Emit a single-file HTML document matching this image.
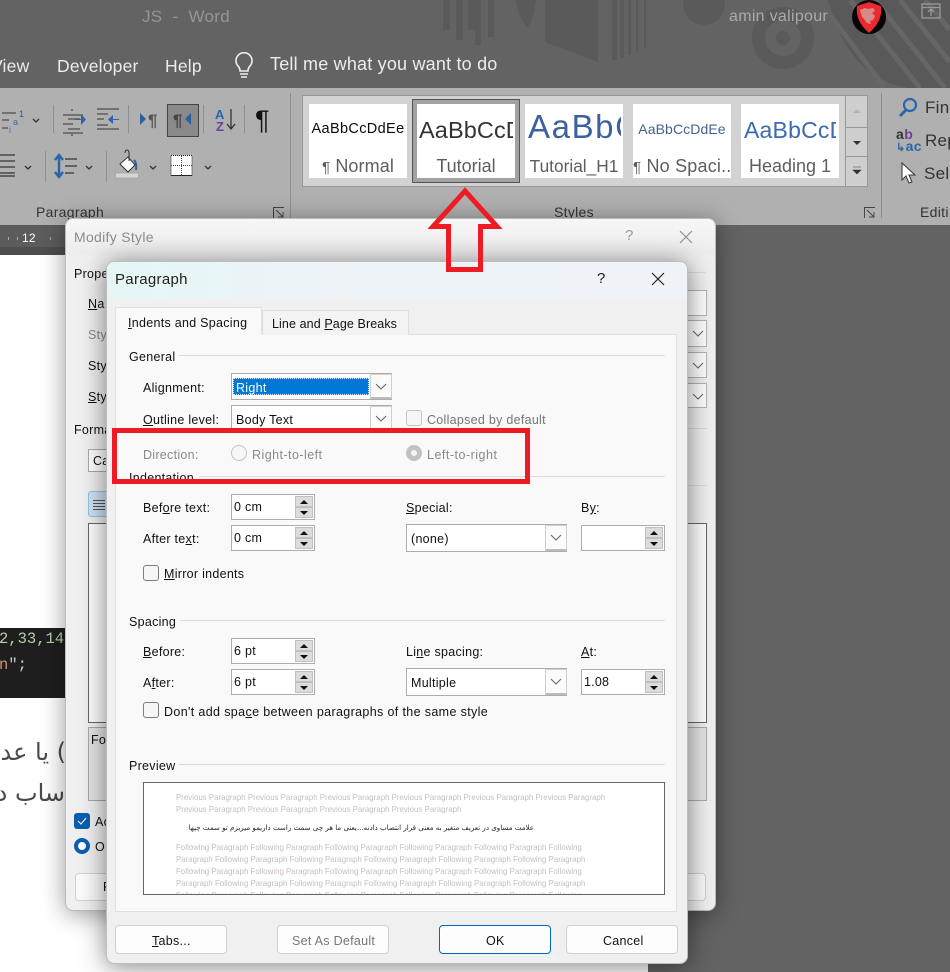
<!DOCTYPE html>
<html><head><meta charset="utf-8"><style>
html,body{margin:0;padding:0;width:950px;height:972px;overflow:hidden;background:#636363}
*{box-sizing:border-box}
div,span,svg{position:absolute}
u{position:static}
.t{white-space:nowrap;transform:translateY(calc(-50% + 1px));font-family:"Liberation Sans","Noto Sans CJK SC",sans-serif;font-size:12.5px;letter-spacing:.28px;color:#111;line-height:16px}
.g{color:#8a8a8a}
.r{font-size:18px;letter-spacing:.2px;color:#ececec}
.tile{top:104px;width:98px;height:74px;background:#fff;overflow:hidden}
.tile span{white-space:nowrap;font-family:"Liberation Sans",sans-serif}
.s1{left:0;width:100%;text-align:center;top:10px;height:30px;line-height:30px;overflow:hidden}
.s2{left:0;width:100%;text-align:center;top:50px;font-size:18px;line-height:24px;color:#5e5e5e;letter-spacing:.1px}
.sep{width:1px;background:#8e8e8e}
.box{background:#fff;border:1px solid #adadad}
.sel{background:#fff;border:2px solid #b4b4b4;border-width:1px}
.dd{width:22px;background:#fbfbfb;border:1px solid #cfcfcf;border-bottom:2px solid #bcbcbc}
.btn{background:#fdfdfd;border:1px solid #d0d0d0;border-radius:4px;height:29px;text-align:center}
.chk{width:16px;height:16px;border:1px solid #7d7d7d;border-radius:3px;background:#f6f6f6}
.line{height:1px;background:#dcdcdc}
.pv{font-family:"Liberation Sans",sans-serif;font-size:7.850px;letter-spacing:.02px;color:#c6bec3;white-space:nowrap;left:32px;line-height:12px}
</style></head><body>

<!-- title bar -->
<div style="left:0;top:0;width:950px;height:88px;background:#636363;overflow:hidden">
<svg width="950" height="88" style="left:0;top:0">
<g fill="#5a5a5a">
<rect x="443" y="0" width="7" height="30"/><rect x="456" y="0" width="7" height="40"/><rect x="468" y="0" width="7" height="30"/>
<rect x="475" y="0" width="6" height="45"/><rect x="488" y="0" width="6" height="37"/>
<path d="M516 0h20q-2 18 -8 28q-10-10-12-28z"/>
<path d="M545 0h53v62l-53-20z"/><path d="M612 0h5v60h-5zM620 0h4v58h-4zM628 0h3v55h-3zM636 0h2v52h-2zM644 0h2v48h-2z"/>
<circle cx="704" cy="4" r="21"/>
<circle cx="783" cy="38" r="31"/>
</g>
<circle cx="783" cy="38" r="18" fill="#636363"/>
<circle cx="783" cy="38" r="7" fill="#5a5a5a"/>
<path d="M828 0h122v88h-42q-60-10-80-88z" fill="#595959"/>
<g stroke="#666" stroke-width="5"><path d="M850 0l70 88M875 0l70 88M900 0l50 62M925 0l25 30M830 15l55 73"/></g>
<circle cx="869" cy="17" r="17" fill="#050505"/>
<path d="M869 2l12 4q2 15-12 27q-14-12-12-27z" fill="#ea2a2e"/>
<path d="M860 10l5-2 3 1 5-1 2 3-3 2 3 3-2 4-3 1 1 3-4-1-3-4-2-2z" fill="#d68a8a"/>
<rect x="922" y="4" width="18" height="14" fill="none" stroke="#9a9a9a" stroke-width="1.3"/><path d="M922 7.500h18M931 16v-6M928 12l3-3 3 3" fill="none" stroke="#9a9a9a" stroke-width="1.3"/>
</svg>
</div>
<div class="t" style="left:142px;top:16px;font-size:17px;color:#959595;white-space:pre;letter-spacing:.3px">JS  -  Word</div>
<div class="t" style="left:729px;top:16px;font-size:16px;color:#aaa;letter-spacing:.3px">amin valipour</div>
<div class="t r" style="left:-9px;top:65px;font-size:17.5px">View</div>
<div class="t r" style="left:57px;top:65px;font-size:17.5px">Developer</div>
<div class="t r" style="left:165px;top:65px;font-size:17.5px">Help</div>
<div class="t r" style="left:270px;top:63px;font-size:18px">Tell me what you want to do</div>
<svg width="22" height="28" style="left:233px;top:52px" fill="none" stroke="#eee" stroke-width="1.6"><path d="M7 19q0-3-2-5a8 8 0 1 1 12 0q-2 2-2 5z"/><path d="M7 22h8M8 25h6"/></svg>

<!-- ribbon -->
<div style="left:0;top:88px;width:950px;height:137px;background:#b0b0b0"></div>
<div class="sep" style="left:290px;top:93px;height:125px"></div>
<div class="sep" style="left:881px;top:93px;height:125px"></div>

<svg width="290" height="90" style="left:0;top:100px">
<g stroke="#333" stroke-width="1" fill="none">
<path d="M2 13h14M2 20h7M2 28h6"/>
<path d="M63 15h20M68 19h12M63 24h10M68 29h12M63 33h20M72 9v2M72 34v2" />
<path d="M97 9h22M97 14h11M97 19h7M97 25h11M97 29h22"/>
</g>
<text x="13" y="25" font-family="Liberation Sans" font-size="9" fill="#3a6ea5">a</text><text x="19" y="17" font-family="Liberation Sans" font-size="9" fill="#2a5a9a">1</text><text x="9" y="33" font-family="Liberation Sans" font-size="9" fill="#2a7ab8">i</text>
<path d="M75 19h6v-5l5 5.500-5 5.500v-5h-6z" fill="#2b66a8"/>
<path d="M119 19h-6v-4l-5 4.500 5 4.500v-4h6z" fill="#2b66a8"/>
<path d="M140 13l6 6-6 6z" fill="#2b5f9e"/>
<rect x="167.500" y="4.500" width="31" height="32" fill="#8a8a8a" stroke="#444"/>
<text x="148" y="26" font-family="Liberation Sans" font-size="17" font-weight="bold" fill="#555">¶</text>
<text x="173" y="26" font-family="Liberation Sans" font-size="17" font-weight="bold" fill="#444">¶</text>
<path d="M191 13l-6 6 6 6z" fill="#2b5f9e"/>
<text x="215" y="19" font-family="Liberation Sans" font-size="13" font-weight="bold" fill="#2b66a8">A</text>
<text x="216" y="31" font-family="Liberation Sans" font-size="13" font-weight="bold" fill="#6b3f98">Z</text>
<path d="M231 9v20M227 24l4 5 4-5" fill="none" stroke="#333" stroke-width="1.300"/>
<text x="255" y="29" font-family="Liberation Sans" font-size="27" fill="#111">¶</text>
<g fill="none" stroke="#333" stroke-width="1.300">
<path d="M33 19l3 3 3-3M25 66l3 3 3-3M86 66l3 3 3-3M150 66l3 3 3-3M205 66l3 3 3-3"/>
<path d="M0 55h15M0 61h15M0 67h15M0 73h15M0 76h15" />
<path d="M65 59h12M65 66h12M65 73h9"/>
</g>
<path d="M59 56v20M55 60l4-5 4 5M55 72l4 5 4-5" fill="none" stroke="#2b66a8" stroke-width="2.500"/>
<path d="M128 57l7 8-7 7-8-8z" fill="#fff" stroke="#333"/><path d="M125 53q0-3 2-3t2 3v8" fill="none" stroke="#333"/>
<path d="M134 60q3 3 2 10" fill="none" stroke="#2b5f9e" stroke-width="2"/>
<rect x="115.500" y="73" width="23" height="5" fill="#d5d5d5" stroke="#a5a5a5" stroke-width=".8"/>
<rect x="171" y="55.500" width="21" height="20" fill="#fff" stroke="#222" stroke-dasharray="1 1"/>
<path d="M171 75.500h21" stroke="#222"/><path d="M181.500 56v20M171 65.500h21" stroke="#444" stroke-dasharray="1 1"/>
<g fill="#8e8e8e"><rect x="53" y="5" width="1" height="28"/><rect x="128" y="5" width="1" height="28"/><rect x="203" y="5" width="1" height="28"/><rect x="244" y="5" width="1" height="28"/><rect x="45" y="51" width="1" height="31"/><rect x="106" y="51" width="1" height="31"/></g>
</svg>

<div class="t" style="left:36px;top:211px;font-size:14px;color:#333;letter-spacing:.3px">Paragraph</div>
<div class="t" style="left:554px;top:211px;font-size:14px;color:#333;letter-spacing:.3px">Styles</div>
<div class="t" style="left:920px;top:211px;font-size:14px;color:#333;letter-spacing:.3px">Editi</div>
<svg width="12" height="12" style="left:273px;top:207px" fill="none" stroke="#444"><path d="M.5 11V.5H11M3 3l7 7M10 5v5H5"/></svg>
<svg width="12" height="12" style="left:864px;top:207px" fill="none" stroke="#444"><path d="M.5 11V.5H11M3 3l7 7M10 5v5H5"/></svg>

<!-- styles gallery -->
<div style="left:302px;top:95px;width:566px;height:92px;background:#d2d2d2;border:1px solid #989898"></div>
<div style="left:412px;top:99px;width:108px;height:84px;background:#a2a2a2;border:1px solid #555"></div>
<div class="tile" style="left:309px"><span class="s1" style="font-size:14.500px;color:#0b0b0b;letter-spacing:.35px">AaBbCcDdEe</span><span class="s2"><span style="position:static;font-size:15px">¶</span> Normal</span></div>
<div class="tile" style="left:417px"><span class="s1" style="font-size:23.500px;color:#333;text-align:left;left:2px;width:94px;top:11px;letter-spacing:.1px">AaBbCcD</span><span class="s2" style="letter-spacing:0">Tutorial</span></div>
<div class="tile" style="left:525px"><span class="s1" style="font-size:33px;color:#3d60a0;text-align:left;left:3px;width:93px;top:8px;letter-spacing:1.6px;height:36px;line-height:30px">AaBbC</span><span class="s2" style="font-size:17.300px;letter-spacing:0">Tutorial_H1</span></div>
<div class="tile" style="left:633px"><span class="s1" style="font-size:14px;color:#44618f;letter-spacing:.1px">AaBbCcDdEe</span><span class="s2" style="font-size:18px;letter-spacing:.2px"><span style="position:static;font-size:15px">¶</span> No Spaci...</span></div>
<div class="tile" style="left:741px"><span class="s1" style="font-size:23px;color:#3a6ab0;text-align:left;left:3px;width:92px;top:11px;letter-spacing:.2px">AaBbCcD</span><span class="s2" style="letter-spacing:0">Heading 1</span></div>
<div style="left:845px;top:96px;width:23px;height:90px;background:#cfcfcf;border-left:1px solid #989898;border-right:1px solid #989898"></div>
<div style="left:845px;top:127px;width:23px;height:1px;background:#989898"></div>
<div style="left:845px;top:156px;width:23px;height:1px;background:#989898"></div>
<svg width="23" height="90" style="left:845px;top:96px"><path d="M8 17l4-4 4 4z" fill="#b4b4b4"/><path d="M8 45h8l-4 4z" fill="#333"/><path d="M8 71h8M8 74h8l-4 4z" fill="#333" stroke="#333" stroke-width=".6"/></svg>

<!-- editing -->
<svg width="22" height="22" style="left:897px;top:96px" fill="none"><circle cx="13" cy="9" r="6" stroke="#2b66a8" stroke-width="2.200"/><path d="M9 14l-6 6" stroke="#2b66a8" stroke-width="3"/></svg>
<div class="t" style="left:925px;top:107px;font-size:17px;color:#333">Find</div>
<div style="left:896px;top:128px;font:bold 14px/12px 'Liberation Sans';color:#333;letter-spacing:.4px">a<span style="position:static;color:#6b3f98">b</span><br><span style="position:static;color:#2b66a8;font-size:11px">↳</span><span style="position:static;color:#2b66a8">ac</span></div>
<div class="t" style="left:925px;top:140px;font-size:17px;color:#333">Rep</div>
<svg width="16" height="24" style="left:901px;top:162px"><path d="M1 1v17l4-4 3 7 3-1-3-7h6z" fill="#fff" stroke="#333"/></svg>
<div class="t" style="left:924px;top:173px;font-size:17px;color:#333">Sele</div>

<!-- document area -->
<div style="left:0;top:225px;width:70px;height:22px;background:#5c5c5c"></div>
<div style="left:0;top:247px;width:70px;height:8px;background:#4e4e4e"></div>
<div style="left:8px;top:237px;width:1px;height:3px;background:#aaa"></div>
<div style="left:17px;top:237px;width:1px;height:3px;background:#aaa"></div>
<div style="left:50px;top:237px;width:1px;height:3px;background:#aaa"></div>
<div class="t" style="left:22px;top:237px;font-size:12px;color:#fff;letter-spacing:.2px">12</div>
<div style="left:0;top:255px;width:648px;height:717px;background:#fff"></div>
<div style="left:0;top:628px;width:70px;height:70px;background:#1e1e1e"></div>
<div class="t" style="left:-1px;top:638px;font-family:'Liberation Mono',monospace;font-size:15.500px;letter-spacing:0;color:#b5cea8">2,33,14</div>
<div class="t" style="left:-1px;top:664px;font-family:'Liberation Mono',monospace;font-size:15.500px;letter-spacing:0;color:#ce9178">n<span style="position:static;color:#ccc">";</span></div>
<div class="t" dir="rtl" style="right:884px;top:751px;font-family:'DejaVu Sans',sans-serif;font-size:24px;letter-spacing:0;color:#4a4a4a;line-height:30px">) یا عدد</div>
<div class="t" dir="rtl" style="right:885px;top:792px;font-family:'DejaVu Sans',sans-serif;font-size:24px;letter-spacing:0;color:#4a4a4a;line-height:30px">ساب داد</div>

<!-- modify style dialog -->
<div style="left:65px;top:218px;width:651px;height:693px;background:#f0f0f0;border:1px solid #bbb;border-radius:8px;box-shadow:0 3px 24px rgba(0,0,0,.4);overflow:hidden">
<div style="left:0;top:0;width:100%;height:36px;background:linear-gradient(#f6f6f6,#ededed)"></div>
</div>
<div class="t" style="left:74px;top:236px;font-size:14px;color:#8c8c8c;letter-spacing:.3px">Modify Style</div>
<div class="t" style="left:625px;top:235px;font-size:15px;color:#9a9a9a">?</div>
<svg width="14" height="14" style="left:679px;top:230px" stroke="#8e8e8e" stroke-width="1.100"><path d="M1 1l12 12M13 1L1 13"/></svg>
<div class="t" style="left:74px;top:273px">Prope</div>
<div class="t" style="left:88px;top:303px"><u>N</u>a</div>
<div class="t g" style="left:88px;top:334px">Sty</div>
<div class="t" style="left:88px;top:365px">Sty</div>
<div class="t" style="left:88px;top:396px"><u>S</u>ty</div>
<div class="t" style="left:74px;top:429px">Forma</div>
<div style="left:88px;top:449px;width:30px;height:23px;background:#fff;border:1px solid #aaa"></div>
<div class="t" style="left:93px;top:460px">Ca</div>
<div style="left:88px;top:491px;width:22px;height:26px;background:#cfe3f6;border:1px solid #99c0e3;border-radius:3px"></div>
<svg width="14" height="12" style="left:93px;top:499px" stroke="#555"><path d="M0 1.500h12M0 4.500h12M0 7.500h12M0 10.500h12"/></svg>
<div style="left:88px;top:523px;width:619px;height:200px;background:#fff;border:1px solid #666"></div>
<div style="left:88px;top:727px;width:619px;height:74px;background:#e6e6e6;border:1px solid #aaa"></div>
<div class="t" style="left:91px;top:739px">Fo</div>
<div style="left:74px;top:813px;width:16px;height:16px;background:#0a5eb0;border-radius:3px"></div>
<svg width="12" height="12" style="left:76px;top:815px" fill="none" stroke="#fff" stroke-width="1"><path d="M2 6l3 3 5-6"/></svg>
<div class="t" style="left:95px;top:821px">Ac</div>
<div style="left:74px;top:838px;width:16px;height:16px;background:#fff;border:4.500px solid #0a5eb0;border-radius:50%"></div>
<div class="t" style="left:95px;top:846px">O</div>
<div style="left:75px;top:873px;width:631px;height:28px;background:#fbfbfb;border:1px solid #d0d0d0;border-radius:4px"></div>
<div class="t" style="left:103px;top:886px">F</div>
<div class="line" style="left:640px;top:272px;width:66px"></div>
<div class="sel" style="left:680px;top:290px;width:27px;height:26px"></div>
<div class="sel" style="left:680px;top:320px;width:27px;height:27px"></div>
<div class="sel" style="left:680px;top:352px;width:27px;height:26px"></div>
<div class="sel" style="left:680px;top:383px;width:27px;height:25px"></div>
<svg width="12" height="90" style="left:692px;top:327px" fill="none" stroke="#666"><path d="M1 4l5 5 5-5M1 36l5 5 5-5M1 67l5 5 5-5"/></svg>
<div class="line" style="left:680px;top:428px;width:27px"></div>
<div class="line" style="left:680px;top:485px;width:27px"></div>

<!-- paragraph dialog -->
<div style="left:106px;top:261px;width:582px;height:703px;background:#f0f0f0;border:1px solid #bdbdbd;border-radius:8px;box-shadow:0 2px 26px rgba(0,0,0,.5);overflow:hidden">
<div style="left:0;top:0;width:100%;height:36px;background:linear-gradient(90deg,#e5f6f6 0,#eef3f8 45%,#eff3f8 100%)"></div>
</div>
<div class="t" style="left:115px;top:279px;font-size:15px;letter-spacing:.3px;color:#222">Paragraph</div>
<div class="t" style="left:597px;top:278px;font-size:15px;font-weight:400;color:#222">?</div>
<svg width="14" height="14" style="left:651px;top:272px" stroke="#222" stroke-width="1.200"><path d="M1 1l12 12M13 1L1 13"/></svg>

<div style="left:115px;top:334px;width:562px;height:578px;background:#f9f9f9;border:1px solid #e0e0e0"></div>
<div style="left:262px;top:310px;width:147px;height:25px;background:#f3f3f3;border:1px solid #e0e0e0;border-bottom:0"></div>
<div style="left:115px;top:307px;width:147px;height:28px;background:#f9f9f9;border:1px solid #e0e0e0;border-bottom:0"></div>
<div class="t" style="left:128px;top:322px"><u>I</u>ndents and Spacing</div>
<div class="t" style="left:272px;top:323px;letter-spacing:.1px">Line and <u>P</u>age Breaks</div>

<div class="t" style="left:129px;top:356px">General</div><div class="line" style="left:179px;top:355px;width:486px"></div>
<div class="t" style="left:143px;top:387px">Ali<u>g</u>nment:</div>
<div class="box" style="left:231px;top:373px;width:161px;height:27px"></div>
<div style="left:233px;top:378px;width:136px;height:17px;background:#0078d7;outline:1px dotted #dfe9f5;outline-offset:-1px"></div>
<div class="t" style="left:236px;top:387px;color:#fff">Right</div>
<div class="dd" style="left:370px;top:374px;height:25px"></div>
<div class="t" style="left:143px;top:419px"><u>O</u>utline level:</div>
<div class="box" style="left:231px;top:405px;width:161px;height:27px"></div>
<div class="t" style="left:236px;top:419px">Body Text</div>
<div class="dd" style="left:370px;top:406px;height:25px"></div>
<svg width="12" height="40" style="left:375px;top:382px" fill="none" stroke="#666"><path d="M1 2l5 5 5-5M1 34l5 5 5-5"/></svg>
<div class="chk" style="left:406px;top:410px;border-color:#c4c4c4"></div>
<div class="t g" style="left:427px;top:419px;color:#767676">Collapsed by default</div>

<div class="t g" style="left:143px;top:454px">Direction:</div>
<div style="left:231px;top:445px;width:16px;height:16px;border:1px solid #c4c4c4;border-radius:50%;background:#f6f6f6"></div>
<div class="t g" style="left:252px;top:454px;letter-spacing:.45px">Right-to-left</div>
<div style="left:406px;top:445px;width:16px;height:16px;border:5px solid #c2c2c2;border-radius:50%;background:#f4f4f4"></div>
<div class="t g" style="left:427px;top:454px;letter-spacing:.5px">Left-to-right</div>
<div class="t" style="left:129px;top:477px">Indentation</div><div class="line" style="left:199px;top:476px;width:466px"></div>

<div class="t" style="left:143px;top:507px">Bef<u>o</u>re text:</div>
<div class="box" style="left:231px;top:494px;width:84px;height:26px"></div>
<div class="t" style="left:234px;top:506px">0 cm</div>
<div class="t" style="left:143px;top:538px">After te<u>x</u>t:</div>
<div class="box" style="left:231px;top:525px;width:84px;height:26px"></div>
<div class="t" style="left:234px;top:537px">0 cm</div>
<div class="t" style="left:406px;top:507px"><u>S</u>pecial:</div>
<div class="box" style="left:406px;top:524px;width:161px;height:28px"></div>
<div class="t" style="left:411px;top:538px">(none)</div>
<div class="dd" style="left:545px;top:525px;height:26px"></div>
<svg width="12" height="10" style="left:550px;top:533px" fill="none" stroke="#666"><path d="M1 2l5 5 5-5"/></svg>
<div class="t" style="left:581px;top:507px">B<u>y</u>:</div>
<div class="box" style="left:581px;top:525px;width:84px;height:26px"></div>
<div class="chk" style="left:143px;top:565px"></div>
<div class="t" style="left:164px;top:573px"><u>M</u>irror indents</div>

<div class="t" style="left:129px;top:621px">Spacing</div><div class="line" style="left:180px;top:620px;width:485px"></div>
<div class="t" style="left:143px;top:651px"><u>B</u>efore:</div>
<div class="box" style="left:231px;top:638px;width:84px;height:26px"></div>
<div class="t" style="left:234px;top:650px">6 pt</div>
<div class="t" style="left:143px;top:682px">A<u>f</u>ter:</div>
<div class="box" style="left:231px;top:669px;width:84px;height:26px"></div>
<div class="t" style="left:234px;top:681px">6 pt</div>
<div class="t" style="left:406px;top:651px">Li<u>n</u>e spacing:</div>
<div class="box" style="left:406px;top:668px;width:161px;height:28px"></div>
<div class="t" style="left:411px;top:682px">Multiple</div>
<div class="dd" style="left:545px;top:669px;height:26px"></div>
<svg width="12" height="10" style="left:550px;top:677px" fill="none" stroke="#666"><path d="M1 2l5 5 5-5"/></svg>
<div class="t" style="left:581px;top:651px"><u>A</u>t:</div>
<div class="box" style="left:581px;top:669px;width:84px;height:26px"></div>
<div class="t" style="left:584px;top:681px;letter-spacing:.2px">1.08</div>
<!-- spinners -->
<svg width="950" height="972" style="left:0;top:0">
<g fill="#dcdcdc" stroke="#c0c0c0" stroke-width="1">
<rect x="295.500" y="496.500" width="17" height="10"/><rect x="295.500" y="507.500" width="17" height="10"/>
<rect x="295.500" y="527.500" width="17" height="10"/><rect x="295.500" y="538.500" width="17" height="10"/>
<rect x="645.500" y="527.500" width="17" height="10"/><rect x="645.500" y="538.500" width="17" height="10"/>
<rect x="295.500" y="640.500" width="17" height="10"/><rect x="295.500" y="651.500" width="17" height="10"/>
<rect x="295.500" y="671.500" width="17" height="10"/><rect x="295.500" y="682.500" width="17" height="10"/>
<rect x="645.500" y="671.500" width="17" height="10"/><rect x="645.500" y="682.500" width="17" height="10"/>
</g>
<g fill="#111">
<path d="M300 504l4-4 4 4zM300 511h8l-4 4zM300 535l4-4 4 4zM300 542h8l-4 4zM650 535l4-4 4 4zM650 542h8l-4 4zM300 648l4-4 4 4zM300 655h8l-4 4zM300 679l4-4 4 4zM300 686h8l-4 4zM650 679l4-4 4 4zM650 686h8l-4 4z"/>
</g>
</svg>
<div class="chk" style="left:143px;top:702px"></div>
<div class="t" style="left:164px;top:711px;letter-spacing:.36px">Don't add spa<u>c</u>e between paragraphs of the same style</div>

<div class="t" style="left:129px;top:765px">Preview</div><div class="line" style="left:178px;top:764px;width:487px"></div>
<div style="left:143px;top:782px;width:522px;height:113px;background:#fff;border:1px solid #666;overflow:hidden">
<div class="pv" style="top:9px">Previous Paragraph Previous Paragraph Previous Paragraph Previous Paragraph Previous Paragraph Previous Paragraph</div>
<div class="pv" style="top:21px">Previous Paragraph Previous Paragraph Previous Paragraph Previous Paragraph</div>
<div class="pv" dir="rtl" style="top:39px;left:auto;right:130px;color:#222;font-size:7.100px;font-family:'DejaVu Sans',sans-serif">علامت مساوی در تعریف متغیر به معنی قرار انتصاب دادنه...یعنی ما هر چی سمت راست داریمو میریزم تو سمت چپها</div>
<div class="pv" style="top:59px">Following Paragraph Following Paragraph Following Paragraph Following Paragraph Following Paragraph Following</div>
<div class="pv" style="top:71px">Paragraph Following Paragraph Following Paragraph Following Paragraph Following Paragraph Following Paragraph</div>
<div class="pv" style="top:83px">Following Paragraph Following Paragraph Following Paragraph Following Paragraph Following Paragraph Following</div>
<div class="pv" style="top:95px">Paragraph Following Paragraph Following Paragraph Following Paragraph Following Paragraph Following Paragraph</div>
<div class="pv" style="top:107px">Following Paragraph Following Paragraph Following Paragraph Following Paragraph Following Paragraph Following</div>
</div>

<div class="btn" style="left:115px;top:925px;width:112px"></div><div class="t" style="left:152px;top:940px"><u>T</u>abs...</div>
<div class="btn" style="left:277px;top:925px;width:112px"></div><div class="t g" style="left:292px;top:940px;color:#777">Set As Default</div>
<div class="btn" style="left:439px;top:925px;width:112px;border-color:#0067c0"></div><div class="t" style="left:486px;top:940px">OK</div>
<div class="btn" style="left:566px;top:925px;width:112px"></div><div class="t" style="left:603px;top:940px">Cancel</div>

<!-- red annotations -->
<div style="left:112px;top:428px;width:418px;height:56px;border:5px solid #ed1c24"></div>
<svg width="90" height="100" style="left:420px;top:180px"><path d="M45 11L13 46.500H28.500V89.500H60.500V46.500H77z" fill="none" stroke="#ed1c24" stroke-width="5"/></svg>
</body></html>
